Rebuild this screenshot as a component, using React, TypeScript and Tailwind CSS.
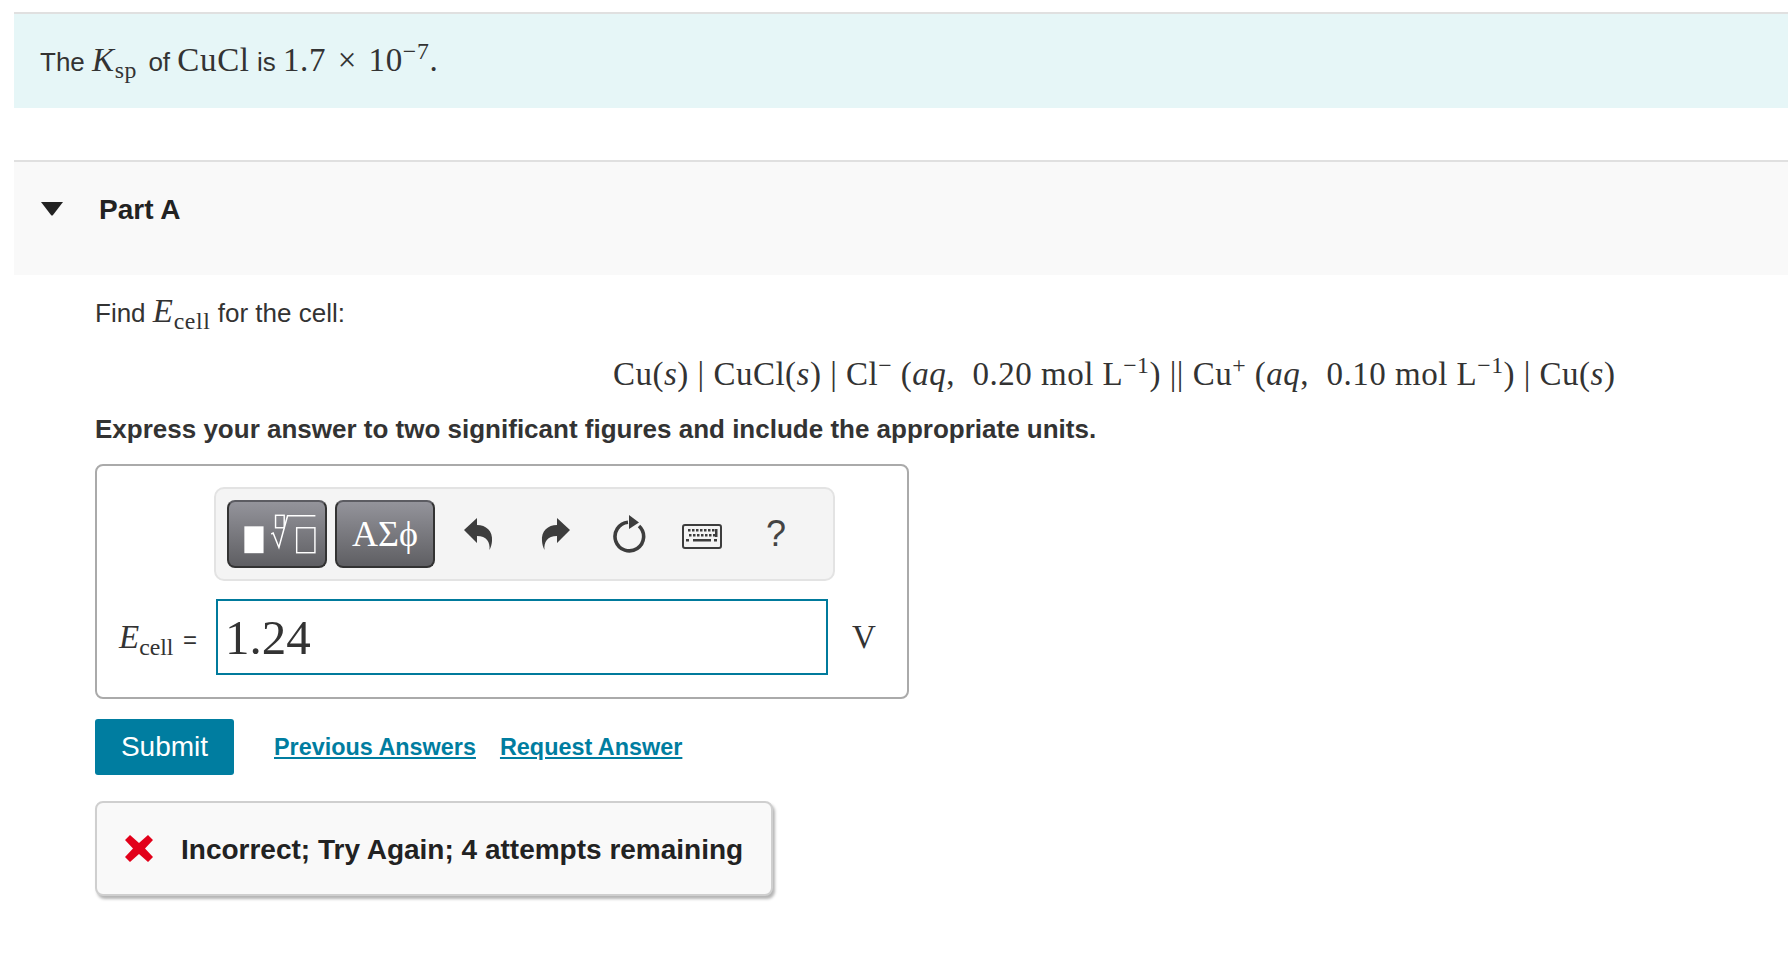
import type { ReactNode } from 'react';

const sans = 'font-["Liberation_Sans",Arial,sans-serif]';
const serif = 'font-["Liberation_Serif","Times_New_Roman",serif]';

function M({ children, className = '' }: { children: ReactNode; className?: string }) {
  return <span className={`${serif} ${className}`}>{children}</span>;
}

function Sub({ children }: { children: ReactNode }) {
  return <span className="text-[0.72em] align-[-0.28em] leading-none">{children}</span>;
}

function Sup({ children }: { children: ReactNode }) {
  return <span className="text-[0.72em] align-[0.5em] leading-none">{children}</span>;
}

function SqrtIcon() {
  return (
    <svg width="100" height="68" viewBox="0 0 100 68" className="block" fill="none">
      <rect x="16" y="26" width="20" height="28" fill="#fff" />
      <rect x="48.5" y="14.5" width="9" height="13" stroke="#fff" strokeWidth="1.5" />
      <path d="M44 34l2-1 6 15 9-33h29" stroke="#fff" strokeWidth="1.6" />
      <rect x="70.5" y="27.5" width="19" height="26" stroke="#fff" strokeWidth="1.5" />
    </svg>
  );
}

function ReplyIcon({ flip = false }: { flip?: boolean }) {
  return (
    <svg width="29" height="32" viewBox="0 0 29 32" className={flip ? '-scale-x-100' : ''} fill="#3d3d3d">
      <path d="M0 12 13 0v7c9 0 16 6 15 16-.2 3-1 6-2.500 9 .8-8-3-14-12.500-14v7z" />
    </svg>
  );
}

function ReloadIcon() {
  return (
    <svg width="34" height="38" viewBox="0 0 34 38" fill="none">
      <path d="M16 7.300a14.300 14.300 0 1 0 11 3.700" stroke="#3d3d3d" strokeWidth="3.600" />
      <path d="M17 0l10 7.500-10 6.500z" fill="#3d3d3d" />
    </svg>
  );
}

function KeyboardIcon() {
  const dots = [6, 10, 14, 18, 22, 26, 30];
  return (
    <svg width="40" height="25" viewBox="0 0 40 25" fill="none">
      <rect x="1" y="1" width="38" height="23" rx="2" stroke="#3d3d3d" strokeWidth="2" />
      {dots.map((x) => (
        <rect key={x} x={x} y="5" width="2.500" height="2.500" fill="#3d3d3d" />
      ))}
      {dots.map((x) => (
        <rect key={x} x={x + 1} y="10" width="2.500" height="2.500" fill="#3d3d3d" />
      ))}
      <rect x="4" y="15" width="3" height="2.500" fill="#3d3d3d" />
      <rect x="11" y="15" width="18" height="2.500" fill="#3d3d3d" />
      <rect x="32" y="15" width="3" height="2.500" fill="#3d3d3d" />
      <rect x="33" y="5" width="2.500" height="8" fill="#3d3d3d" />
    </svg>
  );
}

function Toolbar() {
  const btn =
    'h-[68px] w-[100px] rounded-[8px] border-2 border-[#333] border-t-[#5c5c62] bg-gradient-to-b from-[#94949b] to-[#5f5f63] flex items-center justify-center';
  return (
    <div className="ml-[117px] w-[621px] h-[94px] rounded-[10px] border-2 border-[#e3e3e3] bg-[#f4f4f4] flex items-center pl-[12px]">
      <div className={`${btn} -mx-px overflow-hidden`}>
        <SqrtIcon />
      </div>
      <div className={`${btn} ml-[9px] ${serif} text-[36px] text-white`}>ΑΣϕ</div>
      <div className="flex items-center ml-[29px] w-[30px]">
        <ReplyIcon />
      </div>
      <div className="flex items-center ml-[47px] w-[30px]">
        <ReplyIcon flip />
      </div>
      <div className="flex items-center ml-[41px] w-[36px]">
        <ReloadIcon />
      </div>
      <div className="flex items-center ml-[34px] w-[40px] pt-[5px]">
        <KeyboardIcon />
      </div>
      <div className={`ml-[44px] ${sans} text-[36px] text-[#444]`}>?</div>
    </div>
  );
}

export default function App() {
  return (
    <div className={`${sans} min-h-[960px] bg-white pt-3 pl-[14px] text-[26px] text-[#333]`}>
      <div className="h-[96px] border-t-2 border-[#e0e0e0] bg-[#e6f6f7] pl-[26px] pt-[26px] leading-[36px]">
        The{' '}
        <M className="text-[33px] tracking-[0.02em]">
          <i>K</i>
          <Sub>sp</Sub>
        </M>{' '}
        <span className="ml-[4px]">of</span> <M className="text-[33px] tracking-[0.02em]">CuCl</M> is{' '}
        <M className="text-[33px] tracking-[0.02em] [word-spacing:0.08em]">
          1.7 × 10<Sup>−7</Sup>.
        </M>
      </div>

      <div className="mt-[52px] h-[115px] border-t-2 border-[#e0e0e0] bg-[#f9f9f9] flex items-start pt-[30px]">
        <svg width="22" height="14" viewBox="0 0 22 14" className="ml-[27px] mt-[10px]" fill="#222">
          <path d="M0 0h22L12 13q-1 1-2 0z" />
        </svg>
        <div className="ml-[36px] font-bold text-[28px] leading-[36px] text-[#222]">Part A</div>
      </div>

      <div className="pl-[81px]">
        <div className="pt-[18px] leading-[36px]">
          Find{' '}
          <M className="text-[33px] tracking-[0.02em]">
            <i>E</i>
            <Sub>cell</Sub>
          </M>{' '}
          for the cell:
        </div>

        <div className={`${serif} pl-[518px] pt-[21px] text-[33px] tracking-[0.015em] leading-[38px] whitespace-nowrap`}>
          Cu(<i>s</i>) | CuCl(<i>s</i>) | Cl<Sup>−</Sup> (<i>aq</i>,&nbsp; 0.20 mol L<Sup>−1</Sup>) || Cu<Sup>+</Sup> (<i>aq</i>,&nbsp; 0.10 mol L
          <Sup>−1</Sup>) | Cu(<i>s</i>)
        </div>

        <div className="pt-[18px] font-bold text-[26px] leading-[36px]">
          Express your answer to two significant figures and include the appropriate units.
        </div>

        <div className="mt-[17px] w-[814px] h-[235px] rounded-[8px] border-2 border-[#aaa] pt-[21px]">
          <Toolbar />
          <div className="mt-[18px] flex items-center">
            <M className="w-[119px] pl-[22px] text-[33px] whitespace-nowrap">
              <i>E</i>
              <Sub>cell</Sub>
              <span className={`${sans} text-[24px] ml-[3px]`}> =</span>
            </M>
            <div className={`w-[612px] h-[76px] border-2 border-[#007a9c] flex items-center pl-[7px] ${serif} text-[49px]`}>1.24</div>
            <div className={`ml-[24px] ${serif} text-[33px]`}>V</div>
          </div>
        </div>

        <div className="mt-[20px] flex items-center">
          <button className="w-[139px] h-[56px] rounded-[3px] bg-[#007da0] text-[28px] text-white">Submit</button>
          <a className="ml-[40px] font-bold text-[23.400px] text-[#007da0] underline">Previous Answers</a>
          <a className="ml-[24px] font-bold text-[23.400px] text-[#007da0] underline">Request Answer</a>
        </div>

        <div className="mt-[26px] w-[678px] h-[95px] rounded-[8px] border-2 border-[#cfcfcf] bg-[#f9f9f9] shadow-[2px_3px_3px_#b5b5b5] flex items-center pl-[28px]">
          <svg width="28" height="27" viewBox="0 0 28 27" fill="#e2001a">
            <path d="M0 5 5 0l9 8 9-8 5 5-8 8.500 8 8.500-5 5-9-8-9 8-5-5 8-8.500z" />
          </svg>
          <div className="ml-[28px] pt-[3px] font-bold text-[28px] text-[#222] whitespace-nowrap">Incorrect; Try Again; 4 attempts remaining</div>
        </div>
      </div>
    </div>
  );
}
